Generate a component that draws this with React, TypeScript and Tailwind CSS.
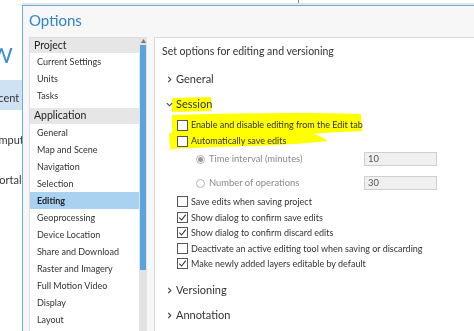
import React from 'react'

const font = { fontFamily: 'Lato, "Noto Sans", "Liberation Sans", sans-serif' }

const projectItems = ['Current Settings', 'Units', 'Tasks']
const appItems = [
  'General',
  'Map and Scene',
  'Navigation',
  'Selection',
  'Editing',
  'Geoprocessing',
  'Device Location',
  'Share and Download',
  'Raster and Imagery',
  'Full Motion Video',
  'Display',
  'Layout',
]

const Chevron = ({ open }: { open?: boolean }) => (
  <svg width="7" height="7" viewBox="0 0 8 8" className="shrink-0">
    {open ? (
      <path d="M1 2.5 L4 5.5 L7 2.5" fill="none" stroke="#444" strokeWidth="1.3" />
    ) : (
      <path d="M2.5 1 L5.5 4 L2.5 7" fill="none" stroke="#444" strokeWidth="1.3" />
    )}
  </svg>
)

const Check = ({ checked }: { checked?: boolean }) => (
  <span className="w-[11px] h-[11px] border border-[#555] bg-white shrink-0 flex items-center justify-center">
    {checked && (
      <svg width="9" height="9" viewBox="0 0 10 10">
        <path d="M1.5 5.2 L4 7.8 L8.6 1.8" fill="none" stroke="#333" strokeWidth="1.2" />
      </svg>
    )}
  </span>
)

const Radio = ({ checked }: { checked?: boolean }) => (
  <span className="w-[9px] h-[9px] rounded-full border border-[#b5b5b5] bg-white shrink-0 flex items-center justify-center">
    {checked && <span className="w-[5px] h-[5px] rounded-full bg-[#999]" />}
  </span>
)

const CheckRow = ({ label, checked, h = 'h-[15.5px]' }: { label: string; checked?: boolean; h?: string }) => (
  <div className={h + ' flex items-center gap-[3px] pl-[15px] text-[9px]'}>
    <Check checked={checked} />
    <span>{label}</span>
  </div>
)

const Section = ({ label }: { label: string }) => (
  <div className="h-[16px] flex items-center gap-[3px] pl-[4px] text-[11px] text-[#333]">
    <Chevron />
    <span>{label}</span>
  </div>
)

export default function App() {
  return (
    <div className="w-[474px] h-[331px] overflow-hidden bg-white flex text-[#333]" style={font}>
      {/* background app sidebar peeking out */}
      <div className="w-[22px] shrink-0 overflow-hidden flex flex-col">
        <div className="h-[44px]" />
        <div className="h-[22px] text-[22px] leading-[22px] text-[#3a8fd6] whitespace-nowrap ml-[-10px]">W</div>
        <div className="h-[14px]" />
        <div className="h-[30px] bg-[#cfe2f3] flex items-center text-[11px] whitespace-nowrap">
          <span className="ml-[-14px] mt-[6px]">Recent</span>
        </div>
        <div className="h-[18px]" />
        <div className="h-[24px] flex items-center text-[11px] whitespace-nowrap">
          <span className="ml-[-15px]">Computer</span>
        </div>
        <div className="h-[16px]" />
        <div className="h-[24px] flex items-center text-[11px] whitespace-nowrap">
          <span className="ml-[-7px]">Portal</span>
        </div>
      </div>

      <div className="flex-1 flex flex-col min-w-0">
        <div className="h-[3px] relative">
          <div className="absolute left-[276px] top-0 w-px h-[3px] bg-[#888]" />
        </div>
        <div className="h-[2px] bg-[#e4e4e4]" />
        <div className="flex-1 border-t border-l border-[#6aaee2] bg-[#f7f7f7] flex flex-col min-h-0">
          <div className="h-[31px] flex items-center pl-[6px] pb-[2px] text-[15px] text-[#3284c8]">Options</div>

          <div className="flex-1 flex min-h-0">
            {/* category list */}
            <div className="ml-[6px] w-[110px] bg-white border-t border-l border-[#dcdcdc] text-[9px] flex flex-col">
              <div className="h-[15px] bg-[#e6e6e6] flex items-center pl-[4px] text-[10.5px] text-[#222]">Project</div>
              {projectItems.map((item) => (
                <div key={item} className="h-[17px] flex items-center pl-[7px]">{item}</div>
              ))}
              <div className="h-[4px]" />
              <div className="h-[16px] bg-[#e6e6e6] flex items-center pl-[4px] text-[10.5px] text-[#222]">Application</div>
              {appItems.map((item) => (
                <div
                  key={item}
                  className={
                    item === 'Editing'
                      ? 'h-[17px] flex items-center pl-[7px] bg-[#a9d1f0] font-bold text-[#222]'
                      : 'h-[17px] flex items-center pl-[7px]'
                  }
                >
                  {item}
                </div>
              ))}
            </div>

            {/* scrollbar */}
            <div className="w-[8px] bg-[#e3e3e3] flex flex-col items-center">
              <div className="h-[8px] flex items-center justify-center">
                <svg width="5" height="4" viewBox="0 0 5 4">
                  <path d="M0 4 L2.5 0 L5 4 Z" fill="#777" />
                </svg>
              </div>
              <div className="w-[6px] h-[225px] bg-[#5aa3dd]" />
            </div>

            {/* settings panel */}
            <div className="ml-[7px] flex-1 bg-white border-t border-l border-[#d9d9d9] relative">
              <svg
                className="absolute left-0 top-0 pointer-events-none mix-blend-multiply"
                width="320"
                height="120"
                viewBox="0 0 320 120"
              >
                {/* panel origin is x155, y38 */}
                <path d="M17 60 L56 59 L56 73 L17 74 Z" fill="#ffff00" />
                <path
                  d="M17 77 C80 75 150 74 206 76 L207 93 C180 94 165 95 158 96 C165 98 170 100 172 103 C150 106 110 108 60 109 L15 111 L14 96 L17 94 Z"
                  fill="#ffff00"
                />
              </svg>

              <div className="relative flex flex-col pl-[7px]">
                <div className="h-[16px] mt-[6px] flex items-center text-[10.5px] text-[#333]">
                  Set options for editing and versioning
                </div>
                <div className="mt-[11px]">
                  <Section label="General" />
                </div>
                <div className="h-[16px] mt-[9px] flex items-center gap-[3px] pl-[4px] text-[11px] text-[#333]">
                  <Chevron open />
                  <span>Session</span>
                </div>
                <div className="mt-[5px] flex flex-col">
                  <CheckRow h="h-[16px]" label="Enable and disable editing from the Edit tab" />
                  <CheckRow h="h-[16px]" label="Automatically save edits" />
                </div>
                <div className="h-[16px] mt-[2px] flex items-center pl-[34px] text-[9.4px] text-[#8a8a8a]">
                  <Radio checked />
                  <span className="ml-[4px] w-[155px]">Time interval (minutes)</span>
                  <div className="w-[73px] h-[14px] border border-[#cfcfcf] bg-[#f0f0f0] flex items-center pl-[3px] text-[#555]">10</div>
                </div>
                <div className="h-[16px] mt-[8px] flex items-center pl-[34px] text-[9.4px] text-[#8a8a8a]">
                  <Radio />
                  <span className="ml-[4px] w-[155px]">Number of operations</span>
                  <div className="w-[73px] h-[14px] border border-[#cfcfcf] bg-[#f0f0f0] flex items-center pl-[3px] text-[#555]">30</div>
                </div>
                <div className="mt-[3px] flex flex-col">
                  <CheckRow label="Save edits when saving project" />
                  <CheckRow label="Show dialog to confirm save edits" checked />
                  <CheckRow label="Show dialog to confirm discard edits" checked />
                  <CheckRow label="Deactivate an active editing tool when saving or discarding" />
                  <CheckRow label="Make newly added layers editable by default" checked />
                </div>
                <div className="mt-[11px]">
                  <Section label="Versioning" />
                </div>
                <div className="mt-[9px]">
                  <Section label="Annotation" />
                </div>
              </div>
            </div>
          </div>
        </div>
      </div>
    </div>
  )
}
